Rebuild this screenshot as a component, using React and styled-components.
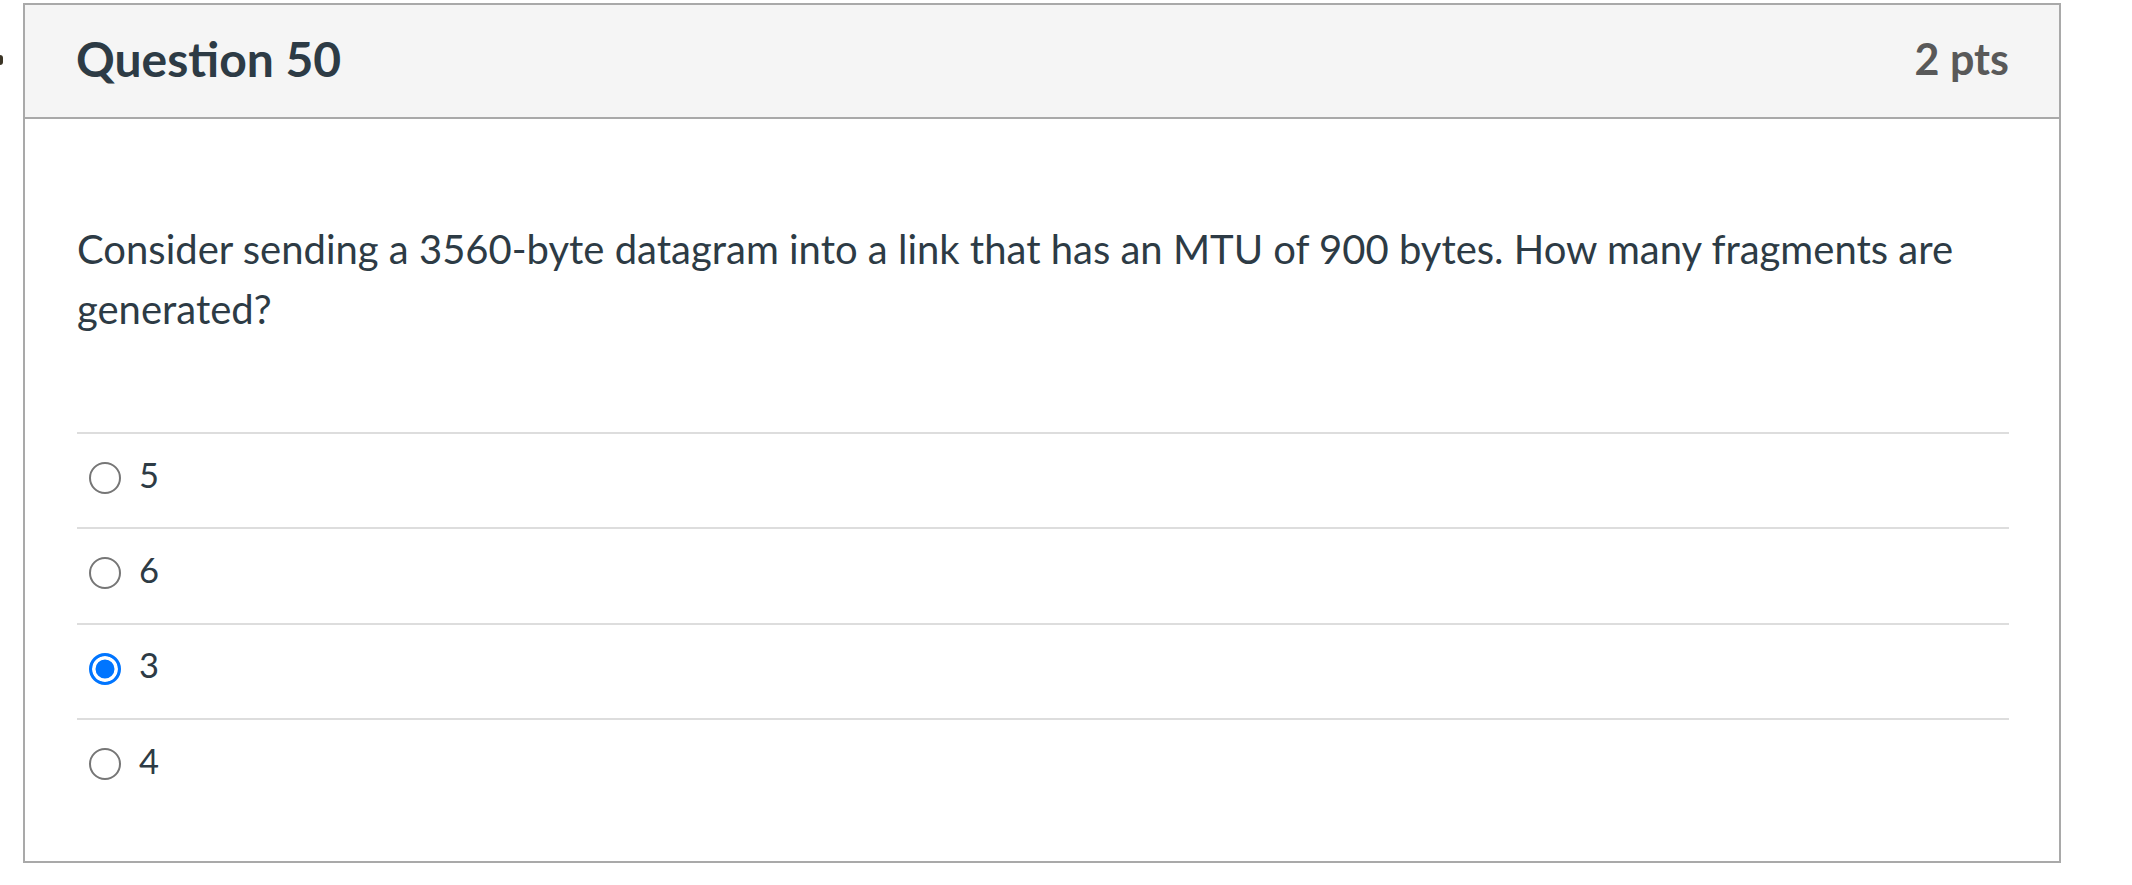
import React from 'react';
import styled, { createGlobalStyle } from 'styled-components';

const GlobalStyle = createGlobalStyle`
  body {
    margin: 0;
    background: #fff;
    font-family: Lato, "Noto Sans", sans-serif;
    color: #2d3b45;
  }
`;

const Page = styled.div`
  display: flex;
  padding-top: 3px;
`;

const Gutter = styled.div`
  width: 23px;
  flex-shrink: 0;
  padding-top: 52px;
`;

const Marker = styled.span`
  display: block;
  width: 3px;
  height: 10px;
  background: #3b3526;
  border-radius: 0 5px 5px 0;
`;

const Card = styled.section`
  width: 2038px;
  box-sizing: border-box;
  border: 2px solid #a9a9a9;
  background: #fff;
`;

const Header = styled.header`
  display: flex;
  align-items: center;
  justify-content: space-between;
  box-sizing: border-box;
  height: 114px;
  padding: 0 50px 6px 51px;
  background: #f5f5f5;
  border-bottom: 2px solid #a9a9a9;
`;

const Title = styled.h2`
  margin: 0;
  font-size: 48px;
  font-weight: 700;
  color: #2d3b45;
`;

const Points = styled.span`
  font-size: 43px;
  font-weight: 700;
  color: #595959;
`;

const Body = styled.div`
  padding: 100px 50px 48px 52px;
`;

const Prompt = styled.p`
  margin: 0 0 93px;
  font-size: 40px;
  line-height: 60px;
`;

const AnswerList = styled.div`
  display: flex;
  flex-direction: column;
`;

const Answer = styled.label`
  display: flex;
  align-items: center;
  gap: 18px;
  box-sizing: border-box;
  height: 95.3px;
  padding: 0 0 5px 12px;
  border-top: 2px solid #dddddd;
  cursor: pointer;
`;

const Radio = styled.span`
  display: block;
  flex-shrink: 0;
  box-sizing: border-box;
  width: 32px;
  height: 32px;
  border-radius: 50%;
  border: ${p => (p.$checked ? '3px solid #0075ff' : '2px solid #767676')};
  background: ${p => (p.$checked ? '#0075ff' : '#fff')};
  box-shadow: ${p => (p.$checked ? 'inset 0 0 0 3.5px #fff' : 'none')};
`;

const AnswerText = styled.span`
  font-size: 34.5px;
  margin-bottom: 8px;
  color: #2d3b45;
`;

const answers = [
  { label: '5', checked: false },
  { label: '6', checked: false },
  { label: '3', checked: true },
  { label: '4', checked: false },
];

export default function App() {
  return (
    <>
      <GlobalStyle />
      <Page>
        <Gutter>
          <Marker />
        </Gutter>
        <Card>
          <Header>
            <Title>Question 50</Title>
            <Points>2 pts</Points>
          </Header>
          <Body>
            <Prompt>
              Consider sending a 3560-byte datagram into a link that has an MTU of 900 bytes. How many fragments are generated?
            </Prompt>
            <AnswerList>
              {answers.map(a => (
                <Answer key={a.label}>
                  <Radio $checked={a.checked} />
                  <AnswerText>{a.label}</AnswerText>
                </Answer>
              ))}
            </AnswerList>
          </Body>
        </Card>
      </Page>
    </>
  );
}
